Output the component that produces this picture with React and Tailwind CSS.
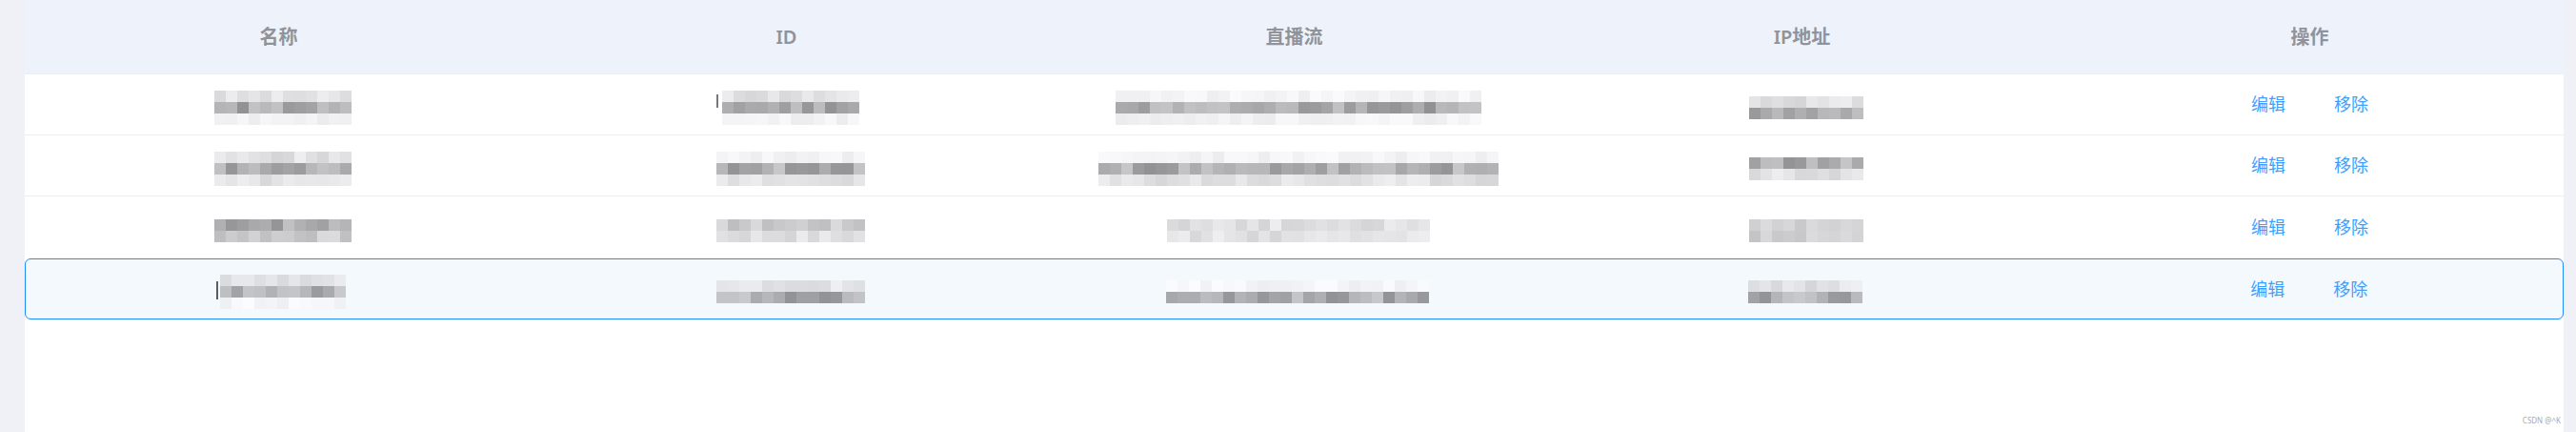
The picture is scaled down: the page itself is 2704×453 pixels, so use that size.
import React from "react";

// pixelated placeholders for the blurred cell values
const rows = [
  {
    name: { cols: 12, tones: ["l", "d", "f"], seed: 3 },
    id: { cols: 12, tones: ["l", "d", "f"], seed: 11, caret: true },
    stream: { cols: 32, tones: ["f", "d", "f"], seed: 21 },
    ip: { cols: 10, tones: ["l", "d"], seed: 31 },
  },
  {
    name: { cols: 12, tones: ["l", "d", "l"], seed: 5 },
    id: { cols: 13, tones: ["f", "d", "l"], seed: 13 },
    stream: { cols: 35, tones: ["f", "d", "l"], seed: 23 },
    ip: { cols: 10, tones: ["d", "l"], seed: 33 },
  },
  {
    name: { cols: 12, tones: ["d", "m"], seed: 7 },
    id: { cols: 13, tones: ["m", "l"], seed: 17 },
    stream: { cols: 23, tones: ["l", "l"], seed: 27 },
    ip: { cols: 10, tones: ["m", "m"], seed: 37 },
  },
  {
    name: { cols: 11, tones: ["l", "d", "f"], seed: 9, cursor: true },
    id: { cols: 13, tones: ["l", "d"], seed: 19 },
    stream: { cols: 23, tones: ["f", "d"], seed: 29 },
    ip: { cols: 10, tones: ["l", "d"], seed: 39 },
    selected: true,
  },
];

const ranges = {
  f: [236, 250],
  l: [212, 238],
  m: [188, 220],
  d: [145, 200],
};

function rand(seed) {
  let s = seed * 9301 + 49297;
  return () => {
    s = (s * 9301 + 49297) % 233280;
    return s / 233280;
  };
}

function Mosaic({ cols, tones, seed, caret, cursor, tint }) {
  const r = rand(seed);
  return (
    <div className="relative flex flex-col">
      {cursor && (
        <span className="absolute -left-[4px] top-[7px] h-[19px] w-[2px] bg-[#5a5d63]" />
      )}
      {caret && (
        <span className="absolute -left-[6px] top-[4px] h-[14px] w-[2px] bg-[#777]" />
      )}
      {tones.map((t, i) => (
        <div key={i} className="flex">
          {Array.from({ length: cols }).map((_, j) => {
            const [lo, hi] = ranges[t];
            const v = Math.round(lo + r() * (hi - lo));
            const b = tint ? Math.min(255, v + 6) : v + 2;
            return (
              <span
                key={j}
                className="h-[12px] w-[12px]"
                style={{ backgroundColor: `rgb(${v},${v + (tint ? 2 : 0)},${b})` }}
              />
            );
          })}
        </div>
      ))}
    </div>
  );
}

function Cell({ children }) {
  return <div className="flex items-center justify-center">{children}</div>;
}

export default function App() {
  return (
    <div
      className="flex h-[453px] w-[2704px] bg-[#eff1f6]"
      style={{ fontFamily: '"Noto Sans", "Noto Sans CJK SC", sans-serif' }}
    >
      <div className="ml-[26px] mr-[13px] flex flex-1 flex-col bg-white">
        <div className="grid h-[78px] grid-cols-5 border-b border-[#ebeef5] bg-[#eef2fa] text-[20px] font-semibold text-[#909399]">
          <Cell>名称</Cell>
          <Cell>ID</Cell>
          <Cell>直播流</Cell>
          <Cell>IP地址</Cell>
          <Cell>操作</Cell>
        </div>

        {rows.map((row, i) => (
          <div
            key={i}
            className={
              row.selected
                ? "grid h-[64px] grid-cols-5 rounded-[6px] border border-[#1f8cf7] bg-[#f4f9fe]"
                : i === 2
                ? "grid h-[65px] grid-cols-5"
                : "grid h-[64px] grid-cols-5 border-b border-[#ebeef5]"
            }
          >
            {["name", "id", "stream", "ip"].map((k) => (
              <Cell key={k}>
                <div className="ml-[8px] mt-[6px]">
                  <Mosaic {...row[k]} tint={row.selected} />
                </div>
              </Cell>
            ))}
            <Cell>
              <div className="flex gap-[51px] text-[18px] text-[#409eff]">
                <button>编辑</button>
                <button>移除</button>
              </div>
            </Cell>
          </div>
        ))}

        <div className="flex flex-1 items-end justify-end pb-[6px] pr-[3px]">
          <span className="text-[8px] text-[#aaa]">CSDN @^K</span>
        </div>
      </div>
    </div>
  );
}
